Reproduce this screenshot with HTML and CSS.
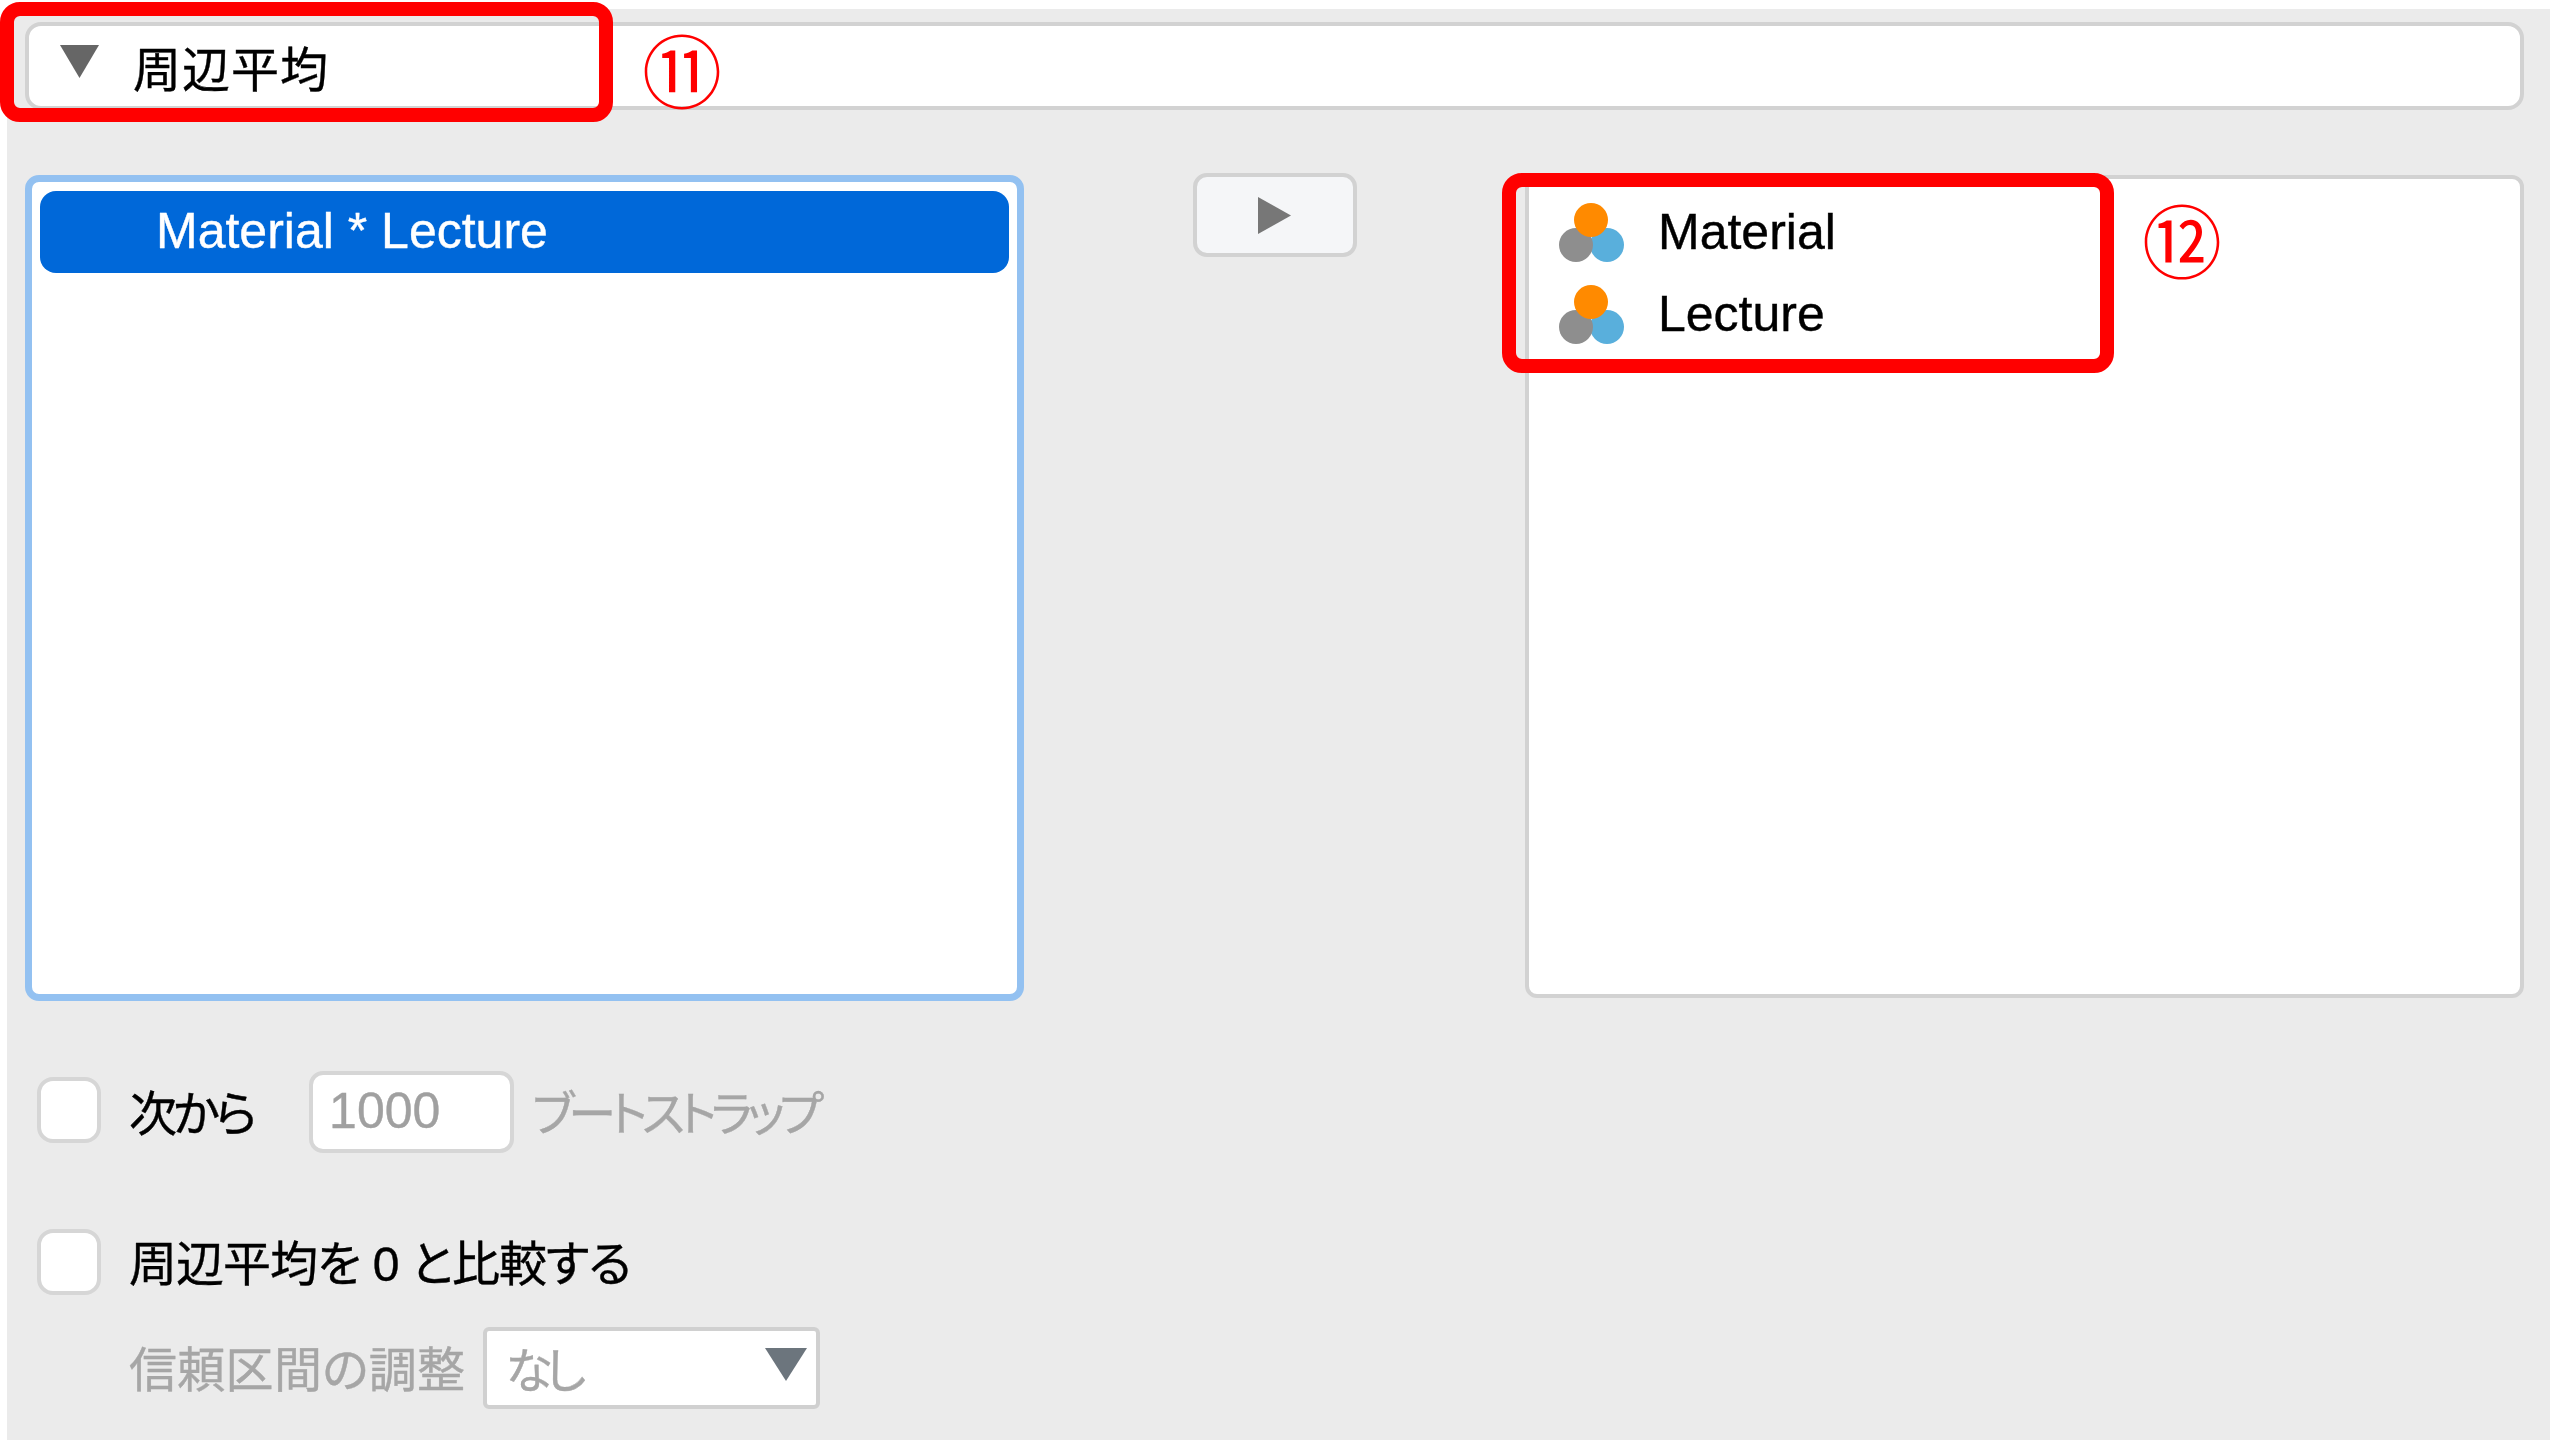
FILE: index.html
```html
<!DOCTYPE html>
<html lang="ja">
<head>
    <meta charset="UTF-8">
    <title>周辺平均</title>
    <link rel="stylesheet" href="styles.css">
</head>
<body>
    <div class="panel">
        <div class="section-field">
            <svg class="arrow-down" viewBox="0 0 41 35"><polygon points="1,1 40,1 20.5,34" /></svg>
            <span class="section-title">周辺平均</span>
        </div>

        <div class="lists">
            <div class="list list-active">
                <div class="list-row-selected">Material * Lecture</div>
            </div>
            <button class="move-button">
                <svg class="arrow-right" viewBox="0 0 33 37"><polygon points="0,0 33,18.5 0,37" /></svg>
            </button>
            <div class="list list-factors">
                <div class="factor">
                    <svg class="factor-icon" viewBox="0 0 66 62">
                        <circle class="dot-blue" cx="48" cy="42" r="17" />
                        <circle class="dot-gray" cx="17" cy="42" r="17" />
                        <circle class="dot-orange" cx="32" cy="17" r="17" />
                    </svg>
                    <span>Material</span>
                </div>
                <div class="factor">
                    <svg class="factor-icon" viewBox="0 0 66 62">
                        <circle class="dot-blue" cx="48" cy="42" r="17" />
                        <circle class="dot-gray" cx="17" cy="42" r="17" />
                        <circle class="dot-orange" cx="32" cy="17" r="17" />
                    </svg>
                    <span>Lecture</span>
                </div>
            </div>
        </div>

        <div class="option option-bootstrap">
            <span class="checkbox"></span>
            <span class="option-label label-from">次から</span>
            <span class="number-input">1000</span>
            <span class="muted boot-label">ブートストラップ</span>
        </div>

        <div class="option option-compare">
            <span class="checkbox"></span>
            <span class="option-label label-compare">周辺平均を 0 と比較する</span>
        </div>

        <div class="option option-adjust">
            <span class="muted adjust-label">信頼区間の調整</span>
            <div class="select">
                <span class="select-value">なし</span>
                <svg class="select-arrow" viewBox="0 0 42 33"><polygon points="0,0 42,0 21,33" /></svg>
            </div>
        </div>
    </div>

    <!-- annotations on top of the screenshot -->
    <div class="callout callout-section"></div>
    <div class="callout-num num-11">⑪</div>
    <div class="callout callout-factors"></div>
    <div class="callout-num num-12">⑫</div>
</body>
</html>
```

FILE: styles.css
```css
* {
    box-sizing: border-box;
}

body {
    margin: 0;
    height: 1440px;
    overflow: hidden;
    position: relative;
    background: #fff;
    color: #000;
    font-family: "Liberation Sans", "Noto Sans CJK JP", sans-serif;
    font-size: 48px;
    font-feature-settings: "palt";
}

.panel {
    margin: 9px 0 0 7px;
    height: 1431px;
    padding: 13px 26px 0 18px;
    background: #ebebeb;
    -webkit-text-stroke: 0.4px;
    filter: blur(0.7px);
}

.section-field {
    display: flex;
    align-items: center;
    gap: 33px;
    height: 88px;
    padding-left: 30px;
    background: #fff;
    border: 4px solid #d2d2d2;
    border-radius: 16px;
}

.arrow-down {
    width: 41px;
    height: 35px;
    margin-top: -10px;
    fill: #666;
}

.section-title {
    letter-spacing: 1px;
}

.lists {
    display: grid;
    grid-template-columns: 999px 1fr 999px;
    margin-top: 65px;
    height: 826px;
    align-items: start;
}

.list {
    background: #fff;
    border-radius: 12px;
}

.list-active {
    height: 826px;
    padding: 9px 8px;
    border: 7px solid #93c1f1;
    border-radius: 14px;
}

.list-row-selected {
    height: 82px;
    padding-left: 116px;
    background: #0068d9;
    border-radius: 16px;
    color: #fff;
    font-size: 50px;
    line-height: 80px;
}

.move-button {
    justify-self: center;
    display: flex;
    align-items: center;
    justify-content: center;
    width: 164px;
    height: 84px;
    margin: -2px 0 0;
    padding: 0;
    background: #f5f6f8;
    border: 4px solid #d2d2d2;
    border-radius: 14px;
}

.arrow-right {
    width: 33px;
    height: 37px;
    fill: #777;
}

.list-factors {
    height: 823px;
    padding: 12px 0 0 30px;
    border: 4px solid #d2d2d2;
}

.factor {
    display: flex;
    align-items: center;
    gap: 33px;
    height: 82px;
    font-size: 50px;
}

.factor-icon {
    width: 66px;
    height: 62px;
    margin-top: 4px;
}

.dot-blue {
    fill: #59afdc;
}

.dot-gray {
    fill: #8e8e8e;
}

.dot-orange {
    fill: #ff8a00;
}

.option {
    display: flex;
    align-items: center;
    padding-left: 12px;
}

.option-bootstrap {
    height: 82px;
    margin-top: 70px;
}

.option-compare {
    height: 66px;
    margin-top: 76px;
}

.option-adjust {
    height: 82px;
    margin-top: 32px;
    padding-left: 104px;
}

.checkbox {
    width: 64px;
    height: 66px;
    margin-right: 28px;
    background: #fff;
    border: 4px solid #d6d6d6;
    border-radius: 16px;
}

.option-bootstrap .checkbox {
    margin-top: -5px;
}

.option-label,
.muted {
    padding-bottom: 5px;
}

.label-from {
    letter-spacing: -4px;
}

.label-compare {
    letter-spacing: -1px;
}

.number-input {
    width: 205px;
    height: 82px;
    margin: 0 18px 0 56px;
    padding-left: 16px;
    background: #fff;
    border: 4px solid #d6d6d6;
    border-radius: 14px;
    color: #a0a0a0;
    font-size: 50px;
    line-height: 72px;
}

.muted {
    color: #a6a6a6;
}

.boot-label {
    letter-spacing: -5.5px;
}

.adjust-label {
    letter-spacing: 0.3px;
}

.select {
    display: flex;
    align-items: center;
    justify-content: space-between;
    width: 337px;
    height: 82px;
    margin-left: 18px;
    padding: 0 9px 0 18px;
    background: #fff;
    border: 4px solid #d0d0d0;
    border-radius: 6px;
    color: #a6a6a6;
}

.select-value {
    letter-spacing: -7px;
    padding-bottom: 2px;
}

.select-arrow {
    width: 42px;
    height: 33px;
    margin-top: -7px;
    fill: #6c757d;
}

/* red annotations */
.callout {
    position: absolute;
    border: 14px solid #f00;
    border-radius: 20px;
}

.callout-section {
    left: 0;
    top: 2px;
    width: 613px;
    height: 120px;
}

.callout-factors {
    left: 1502px;
    top: 173px;
    width: 612px;
    height: 200px;
}

.callout-num {
    position: absolute;
    font-family: "Noto Sans CJK JP", sans-serif;
    font-feature-settings: normal;
    font-size: 80px;
    line-height: 80px;
    color: #f00;
}

.num-11 {
    left: 642px;
    top: 27px;
}

.num-12 {
    left: 2142px;
    top: 197px;
}
```
